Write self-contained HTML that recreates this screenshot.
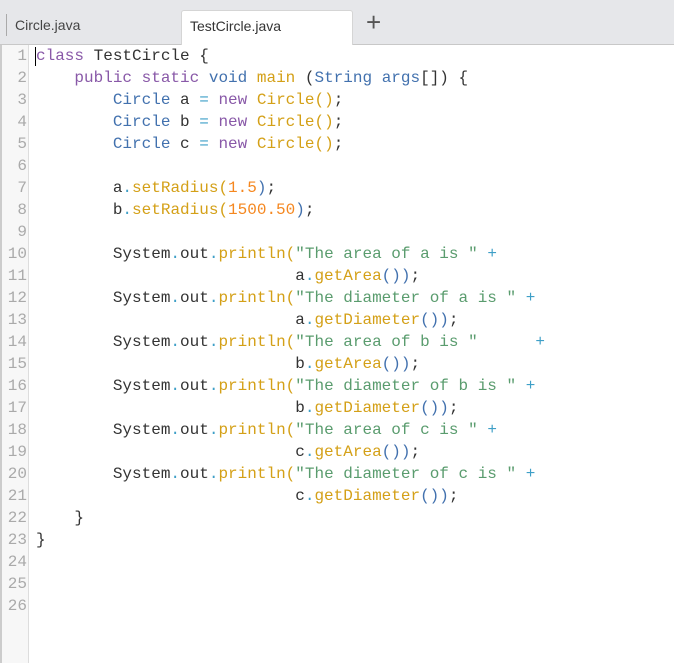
<!DOCTYPE html><html><head><style>
body{margin:0;width:674px;height:663px;overflow:hidden;background:#fff;font-family:"Liberation Sans",sans-serif;position:relative}
.bar{position:absolute;left:0;top:0;width:674px;height:44px;background:#e6e7ea;border-bottom:1px solid #c8c8c8}
.t1{position:absolute;left:6px;top:14px;height:22px;border-left:1px solid #aaa;padding-left:8px;font-size:14px;color:#444;line-height:22px}
.t2{position:absolute;left:181px;top:10px;width:172px;height:35px;background:#fff;border:1px solid #d5d5d5;border-bottom:none;border-radius:3px 3px 0 0;font-size:14px;color:#333;line-height:30px;box-sizing:border-box;padding-left:8px}
.plus{position:absolute;left:366px;top:7px;font-size:26px;color:#555;font-weight:300}
.gut{position:absolute;left:0;top:45px;width:29px;height:618px;background:#f7f7f7;border-right:1px solid #ddd;border-left:2px solid #ccc;box-sizing:border-box}
pre{margin:0;font-family:"Liberation Mono",monospace;font-size:16px;line-height:22px}
.nums{position:absolute;left:0;top:45px;width:27px;text-align:right;color:#aaa}
.code{position:absolute;left:36px;top:45px;color:#333}
.k{color:#8959a8}.ty{color:#4271ae}.f{color:#d4a017}.s{color:#5a9c6e}.n{color:#f5871f}.o{color:#3e9fc7}
.cur{position:absolute;left:35px;top:47px;width:1px;height:19px;background:#000}
</style></head><body>
<div class="bar"><div class="t1">Circle.java</div><div class="t2">TestCircle.java</div><div class="plus">+</div></div>
<div class="gut"></div>
<pre class="nums">1
2
3
4
5
6
7
8
9
10
11
12
13
14
15
16
17
18
19
20
21
22
23
24
25
26</pre>
<pre class="code"><span class="k">class</span> TestCircle {
    <span class="k">public</span> <span class="k">static</span> <span class="ty">void</span> <span class="f">main</span> (<span class="ty">String</span> <span class="ty">args</span>[]) {
        <span class="ty">Circle</span> a <span class="o">=</span> <span class="k">new</span> <span class="f">Circle()</span>;
        <span class="ty">Circle</span> b <span class="o">=</span> <span class="k">new</span> <span class="f">Circle()</span>;
        <span class="ty">Circle</span> c <span class="o">=</span> <span class="k">new</span> <span class="f">Circle()</span>;

        a<span class="o">.</span><span class="f">setRadius(</span><span class="n">1.5</span><span class="ty">)</span>;
        b<span class="o">.</span><span class="f">setRadius(</span><span class="n">1500.50</span><span class="ty">)</span>;

        System<span class="o">.</span>out<span class="o">.</span><span class="f">println(</span><span class="s">"The area of a is "</span> <span class="o">+</span>
                           a<span class="o">.</span><span class="f">getArea</span><span class="ty">())</span>;
        System<span class="o">.</span>out<span class="o">.</span><span class="f">println(</span><span class="s">"The diameter of a is "</span> <span class="o">+</span>
                           a<span class="o">.</span><span class="f">getDiameter</span><span class="ty">())</span>;
        System<span class="o">.</span>out<span class="o">.</span><span class="f">println(</span><span class="s">"The area of b is "</span>      <span class="o">+</span>
                           b<span class="o">.</span><span class="f">getArea</span><span class="ty">())</span>;
        System<span class="o">.</span>out<span class="o">.</span><span class="f">println(</span><span class="s">"The diameter of b is "</span> <span class="o">+</span>
                           b<span class="o">.</span><span class="f">getDiameter</span><span class="ty">())</span>;
        System<span class="o">.</span>out<span class="o">.</span><span class="f">println(</span><span class="s">"The area of c is "</span> <span class="o">+</span>
                           c<span class="o">.</span><span class="f">getArea</span><span class="ty">())</span>;
        System<span class="o">.</span>out<span class="o">.</span><span class="f">println(</span><span class="s">"The diameter of c is "</span> <span class="o">+</span>
                           c<span class="o">.</span><span class="f">getDiameter</span><span class="ty">())</span>;
    }
}</pre>
<div class="cur"></div>
</body></html>
